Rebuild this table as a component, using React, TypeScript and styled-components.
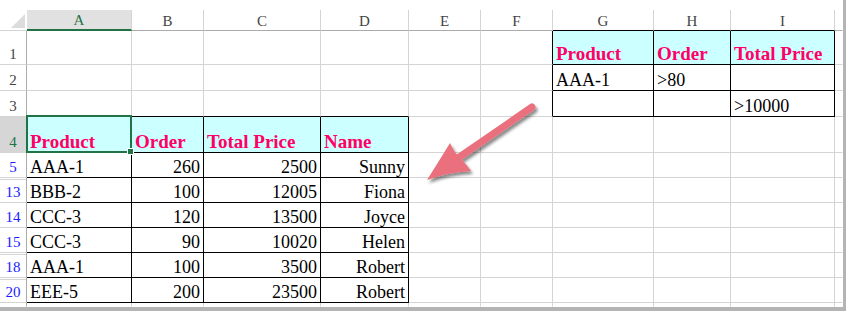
import { Fragment } from "react";
import styled, { createGlobalStyle, css } from "styled-components";

const GRID = "#d4d4d4";
const HEAD_LINE = "#ababab";
const GREEN = "#217346";
const SERIF = `"Liberation Serif", Tinos, "Times New Roman", "Nimbus Roman", "Nimbus Roman No9 L", "TeX Gyre Termes", FreeSerif, "Noto Serif", "DejaVu Serif", Times, serif`;

const GlobalStyle = createGlobalStyle`
  html, body {
    margin: 0;
    padding: 0;
    background: #fff;
    font-family: ${SERIF};
  }
`;

const Frame = styled.div`
  position: relative;
  width: 843px;
  padding-top: 10px;
  border-right: 3px solid #b4b4b4;
  border-bottom: 4px solid #b4b4b4;
  background: #fff;
  overflow: hidden;
`;

const Sheet = styled.div`
  display: grid;
  grid-template-columns: 27px 105px 72px 117px 88px 72px 72px 101px 77px 104px 8px;
  grid-template-rows: 21px 34px 26px 26px 36px repeat(6, 25px) 4px;
  font-family: ${SERIF};
`;

const Corner = styled.div`
  position: relative;
  border-bottom: 1px solid ${GRID};

  &::after {
    content: "";
    position: absolute;
    right: 2px;
    bottom: 2px;
    border-left: 14px solid transparent;
    border-bottom: 14px solid #dcdcdc;
  }
`;

const ColHead = styled.div<{ $sel?: boolean; $boxed?: boolean; $last?: boolean }>`
  display: flex;
  align-items: flex-end;
  justify-content: center;
  font-size: 15px;
  line-height: 17px;
  color: #444;
  border-right: 1px solid ${(p) => (p.$last ? "transparent" : GRID)};
  border-bottom: 1px solid ${(p) => (p.$boxed ? "#000" : HEAD_LINE)};
  ${(p) =>
    p.$sel &&
    css`
      background: #e1e1e1;
      color: ${GREEN};
      border-bottom: 2px solid ${GREEN};
    `}
`;

const RowHead = styled.div<{ $sel?: boolean; $filtered?: boolean; $gap?: boolean; $cut?: boolean }>`
  display: flex;
  justify-content: center;
  align-items: flex-end;
  padding-bottom: 2px;
  font-size: 15px;
  line-height: 15px;
  color: ${(p) => (p.$filtered ? "#1a1aff" : "#444")};
  border-right: 1px solid ${HEAD_LINE};
  border-bottom: 1px solid ${(p) => (p.$cut ? "transparent" : GRID)};
  ${(p) =>
    p.$gap &&
    css`
      background: linear-gradient(to bottom, transparent 1px, ${GRID} 1px, ${GRID} 2px, transparent 2px);
    `}
  ${(p) =>
    p.$sel &&
    css`
      background: #d6d6d6;
      color: ${GREEN};
    `}
`;

const Cell = styled.div<{
  $kind?: Kind;
  $rb?: boolean;
  $bb?: boolean;
  $noRight?: boolean;
  $noBottom?: boolean;
}>`
  position: relative;
  display: flex;
  align-items: flex-end;
  justify-content: ${(p) => (p.$kind === "right" ? "flex-end" : "flex-start")};
  padding: 0 3px;
  font-size: 18px;
  line-height: 20px;
  color: #000;
  white-space: nowrap;
  border-right: 1px solid ${(p) => (p.$rb ? "#000" : p.$noRight ? "transparent" : GRID)};
  border-bottom: 1px solid ${(p) => (p.$bb ? "#000" : p.$noBottom ? "transparent" : GRID)};
  ${(p) =>
    p.$kind === "head" &&
    css`
      background: #ccffff;
      color: #ff0066;
      font-weight: 700;
      font-size: 19px;
      line-height: 21px;
    `}
`;

const Selection = styled.div`
  position: absolute;
  left: -1px;
  top: -2px;
  width: 106px;
  height: 38px;
  box-sizing: border-box;
  border: 2px solid ${GREEN};
  z-index: 2;
  pointer-events: none;

  &::after {
    content: "";
    position: absolute;
    right: -4px;
    bottom: -4px;
    width: 5px;
    height: 5px;
    background: ${GREEN};
    border: 1px solid #fff;
  }
`;

const ArrowLayer = styled.svg`
  position: absolute;
  left: 0;
  top: 0;
  pointer-events: none;
  z-index: 3;
`;

type Kind = "head" | "left" | "right";
type Val = { v: string; k: Kind };
type Row = {
  label: string;
  filtered?: boolean;
  gap?: boolean;
  sel?: boolean;
  cut?: boolean;
  cells: Record<number, Val>;
};

const h = (v: string): Val => ({ v, k: "head" });
const l = (v: string): Val => ({ v, k: "left" });
const r = (v: string | number): Val => ({ v: String(v), k: "right" });

const LETTERS = ["A", "B", "C", "D", "E", "F", "G", "H", "I", ""];

const rows: Row[] = [
  { label: "1", cells: { 7: h("Product"), 8: h("Order"), 9: h("Total Price") } },
  { label: "2", cells: { 7: l("AAA-1"), 8: l(">80") } },
  { label: "3", cells: { 9: l(">10000") } },
  { label: "4", sel: true, cells: { 1: h("Product"), 2: h("Order"), 3: h("Total Price"), 4: h("Name") } },
  { label: "5", filtered: true, cells: { 1: l("AAA-1"), 2: r(260), 3: r(2500), 4: r("Sunny") } },
  { label: "13", filtered: true, gap: true, cells: { 1: l("BBB-2"), 2: r(100), 3: r(12005), 4: r("Fiona") } },
  { label: "14", filtered: true, cells: { 1: l("CCC-3"), 2: r(120), 3: r(13500), 4: r("Joyce") } },
  { label: "15", filtered: true, cells: { 1: l("CCC-3"), 2: r(90), 3: r(10020), 4: r("Helen") } },
  { label: "18", filtered: true, gap: true, cells: { 1: l("AAA-1"), 2: r(100), 3: r(3500), 4: r("Robert") } },
  { label: "20", filtered: true, gap: true, cells: { 1: l("EEE-5"), 2: r(200), 3: r(23500), 4: r("Robert") } },
  // row 21 is only a sliver at the bottom edge
  { label: "", cut: true, cells: {} },
];

// which cell edges carry the black table borders
const inTable1 = (ri: number, ci: number) => ci >= 1 && ci <= 4 && ri >= 3 && ri <= 9;
const inTable2 = (ri: number, ci: number) => ci >= 7 && ci <= 9 && ri >= 0 && ri <= 2;

const rightBlack = (ri: number, ci: number) =>
  inTable1(ri, ci) || inTable2(ri, ci) || (ci === 6 && ri <= 2);
const bottomBlack = (ri: number, ci: number) =>
  inTable1(ri, ci) || inTable2(ri, ci) || (ri === 2 && ci >= 1 && ci <= 4);

const Arrow = () => (
  <ArrowLayer width={843} height={307} viewBox="0 0 843 307">
    <defs>
      <filter id="arrowShadow" x="-30%" y="-30%" width="160%" height="160%">
        <feDropShadow dx="2" dy="3" stdDeviation="1.6" floodColor="#000" floodOpacity="0.45" />
      </filter>
    </defs>
    <g filter="url(#arrowShadow)" fill="#e9707c">
      <line x1="532" y1="107" x2="458" y2="158" stroke="#e9707c" strokeWidth="7" strokeLinecap="round" />
      <path d="M427 180 Q439 161 450 143 Q455 154 462 160 Q467 165 471 171 Q449 172 427 180 Z" />
    </g>
  </ArrowLayer>
);

export default function App() {
  return (
    <>
      <GlobalStyle />
      <Frame>
        <Sheet>
          <Corner />
          {LETTERS.map((letter, i) => (
            <ColHead key={i} $sel={i === 0} $boxed={i >= 6 && i <= 8} $last={i === 9}>
              {letter}
            </ColHead>
          ))}
          {rows.map((row, ri) => (
            <Fragment key={ri}>
              <RowHead $sel={row.sel} $filtered={row.filtered} $gap={row.gap} $cut={row.cut}>
                {row.label}
              </RowHead>
              {LETTERS.map((_, i) => {
                const ci = i + 1;
                const val = row.cells[ci];
                return (
                  <Cell
                    key={ci}
                    $kind={val?.k}
                    $rb={rightBlack(ri, ci)}
                    $bb={bottomBlack(ri, ci)}
                    $noRight={ci === 10}
                    $noBottom={row.cut}
                  >
                    {val?.v}
                    {row.sel && ci === 1 && <Selection />}
                  </Cell>
                );
              })}
            </Fragment>
          ))}
        </Sheet>
        <Arrow />
      </Frame>
    </>
  );
}
